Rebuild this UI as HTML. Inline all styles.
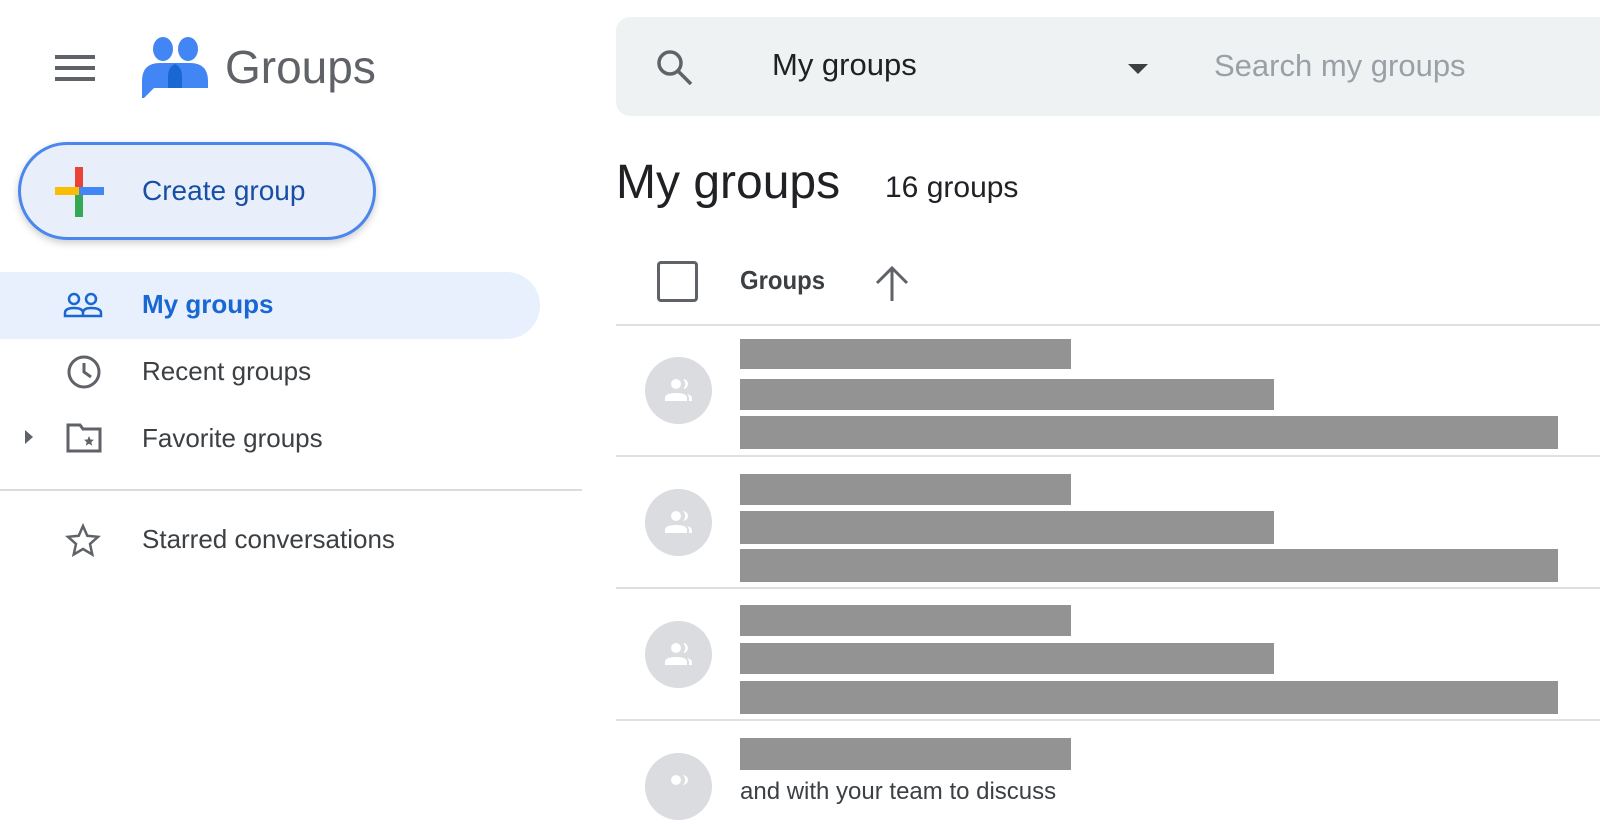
<!DOCTYPE html>
<html><head><style>
*{margin:0;padding:0;box-sizing:border-box}
body{width:1600px;height:800px;overflow:hidden;background:#fff;font-family:"Liberation Sans",Arial,sans-serif;position:relative;color:#3c4043}
.a{position:absolute}
.bar{position:absolute;background:#939393;left:740px}
.line{position:absolute;left:616px;right:0;height:2px;background:#e0e0e0}
.av{position:absolute;left:645px;width:67px;height:67px;border-radius:50%;background:#dadce0}
.av svg{position:absolute;left:17px;top:17px}
.nav{position:absolute;left:142px;font-size:26px;color:#3c4043}
</style></head><body>
<div class="a" style="left:55px;top:55px;width:40px;height:4px;background:#5f6368"></div>
<div class="a" style="left:55px;top:66px;width:40px;height:4px;background:#5f6368"></div>
<div class="a" style="left:55px;top:77px;width:40px;height:4px;background:#5f6368"></div>
<svg class="a" style="left:140px;top:35px" width="70" height="65" viewBox="0 0 70 65">
<ellipse cx="23" cy="14" rx="10" ry="12" fill="#4285f4"/>
<ellipse cx="48" cy="14" rx="10" ry="12" fill="#4285f4"/>
<path d="M2 63 V46 Q2 28 20 28 H50 Q68 28 68 46 V53 H14 L4 63 Z" fill="#4285f4"/>
<path d="M28 53 V42 Q28 32 35 29 Q42 32 42 42 V53Z" fill="#1967d2"/>
</svg>
<div class="a" style="left:225px;top:40px;font-size:46px;color:#5f6368">Groups</div>
<div class="a" style="left:18px;top:142px;width:358px;height:98px;border-radius:49px;background:#e8effa;border:3px solid #4a86ec;box-shadow:0 3px 8px rgba(0,0,0,.2)"></div>
<div class="a" style="left:75px;top:167px;width:8px;height:25px;background:#ea4335"></div>
<div class="a" style="left:55px;top:187px;width:24px;height:8px;background:#fbbc04"></div>
<div class="a" style="left:79px;top:187px;width:25px;height:8px;background:#4285f4"></div>
<div class="a" style="left:75px;top:195px;width:8px;height:22px;background:#34a853"></div>
<div class="a" style="left:142px;top:175px;font-size:28px;color:#174ea6">Create group</div>
<div class="a" style="left:0;top:272px;width:540px;height:67px;background:#e8f0fe;border-radius:0 34px 34px 0"></div>
<svg class="a" style="left:63px;top:292px" width="40" height="26" viewBox="0 0 40 26" fill="none" stroke="#1967d2" stroke-width="2.5"><circle cx="11" cy="7" r="5"/><circle cx="28" cy="7" r="5"/><path d="M2 24 V21 Q2 16 11 16 Q20 16 20 21 V24Z M20 24 V21 Q20 16 28 16 Q38 16 38 21 V24Z"/></svg>
<div class="nav" style="top:289px;color:#1967d2;font-weight:bold">My groups</div>
<svg class="a" style="left:66px;top:354px" width="36" height="36" viewBox="0 0 36 36" fill="none" stroke="#5f6368" stroke-width="3"><circle cx="18" cy="18" r="15"/><path d="M18 9 V18 L25 23"/></svg>
<div class="nav" style="top:356px">Recent groups</div>
<div class="a" style="left:25px;top:430px;width:0;height:0;border-top:7px solid transparent;border-bottom:7px solid transparent;border-left:8px solid #5f6368"></div>
<svg class="a" style="left:66px;top:423px" width="36" height="30" viewBox="0 0 36 30" fill="none" stroke="#5f6368" stroke-width="3"><path d="M2 2 H14 L17 6 H34 V28 H2Z"/><path d="M23 13 l1.5 3.5 3.5.3-2.7 2.3.9 3.6-3.2-2-3.2 2 .9-3.6-2.7-2.3 3.5-.3z" fill="#5f6368" stroke="none"/></svg>
<div class="nav" style="top:423px">Favorite groups</div>
<div class="a" style="left:0;top:489px;width:582px;height:2px;background:#dadce0"></div>
<svg class="a" style="left:65px;top:523px" width="36" height="34" viewBox="0 0 36 34" fill="none" stroke="#5f6368" stroke-width="2.5"><path d="M18 3 L22.3 12.8 33 13.8 25 21 27.3 31.5 18 26 8.7 31.5 11 21 3 13.8 13.7 12.8Z"/></svg>
<div class="nav" style="top:524px">Starred conversations</div>
<div class="a" style="left:616px;top:17px;width:1000px;height:99px;border-radius:14px;background:#eff2f3"></div>
<svg class="a" style="left:655px;top:48px" width="40" height="40" viewBox="0 0 40 40" fill="none" stroke="#5f6368" stroke-width="3.5"><circle cx="15" cy="15" r="11"/><path d="M23 23 L36 36"/></svg>
<div class="a" style="left:772px;top:47px;font-size:31px;color:#202124">My groups</div>
<div class="a" style="left:1128px;top:64px;border-left:10px solid transparent;border-right:10px solid transparent;border-top:10px solid #3c4043"></div>
<div class="a" style="left:1214px;top:48px;font-size:31px;color:#9aa0a6">Search my groups</div>
<div class="a" style="left:616px;top:155px;font-size:48px;color:#202124">My groups</div>
<div class="a" style="left:885px;top:171px;font-size:30px;color:#202124">16 groups</div>
<div class="a" style="left:657px;top:261px;width:41px;height:41px;border:3.5px solid #5f6368;border-radius:4px"></div>
<div class="a" style="left:740px;top:265px;font-size:26px;font-weight:bold;color:#3c4043;transform:scaleX(.92);transform-origin:left">Groups</div>
<svg class="a" style="left:872px;top:264px" width="40" height="40" viewBox="0 0 40 40" fill="none" stroke="#5f6368" stroke-width="3"><path d="M20 37 V4 M5 19 L20 4 L35 19"/></svg>
<div class="line" style="top:324px"></div>
<div class="line" style="top:455px"></div>
<div class="line" style="top:587px"></div>
<div class="line" style="top:719px"></div>
<div class="av" style="top:357px"><svg width="34" height="34" viewBox="0 0 34 34" fill="#fff"><circle cx="14" cy="10" r="5"/><path d="M21 5 a5 5 0 0 1 0 10 a7 7 0 0 0 0-10z"/><path d="M3 27 V24 Q3 19 14 19 Q25 19 25 24 V27Z"/><path d="M25 20 Q30 21 30 25 V27 H27 V24 Q27 22 25 20Z"/></svg></div>
<div class="av" style="top:489px"><svg width="34" height="34" viewBox="0 0 34 34" fill="#fff"><circle cx="14" cy="10" r="5"/><path d="M21 5 a5 5 0 0 1 0 10 a7 7 0 0 0 0-10z"/><path d="M3 27 V24 Q3 19 14 19 Q25 19 25 24 V27Z"/><path d="M25 20 Q30 21 30 25 V27 H27 V24 Q27 22 25 20Z"/></svg></div>
<div class="av" style="top:621px"><svg width="34" height="34" viewBox="0 0 34 34" fill="#fff"><circle cx="14" cy="10" r="5"/><path d="M21 5 a5 5 0 0 1 0 10 a7 7 0 0 0 0-10z"/><path d="M3 27 V24 Q3 19 14 19 Q25 19 25 24 V27Z"/><path d="M25 20 Q30 21 30 25 V27 H27 V24 Q27 22 25 20Z"/></svg></div>
<div class="av" style="top:753px"><svg width="34" height="34" viewBox="0 0 34 34" fill="#fff"><circle cx="14" cy="10" r="5"/><path d="M21 5 a5 5 0 0 1 0 10 a7 7 0 0 0 0-10z"/></svg></div>
<div class="bar" style="top:339px;width:331px;height:30px"></div>
<div class="bar" style="top:379px;width:534px;height:31px"></div>
<div class="bar" style="top:416px;width:818px;height:33px"></div>
<div class="bar" style="top:474px;width:331px;height:31px"></div>
<div class="bar" style="top:511px;width:534px;height:33px"></div>
<div class="bar" style="top:549px;width:818px;height:33px"></div>
<div class="bar" style="top:605px;width:331px;height:31px"></div>
<div class="bar" style="top:643px;width:534px;height:31px"></div>
<div class="bar" style="top:681px;width:818px;height:33px"></div>
<div class="bar" style="top:738px;width:331px;height:32px"></div>
<div class="a" style="left:740px;top:778px;font-size:24px;color:#3c4043">and with your team to discuss</div>
</body></html>
